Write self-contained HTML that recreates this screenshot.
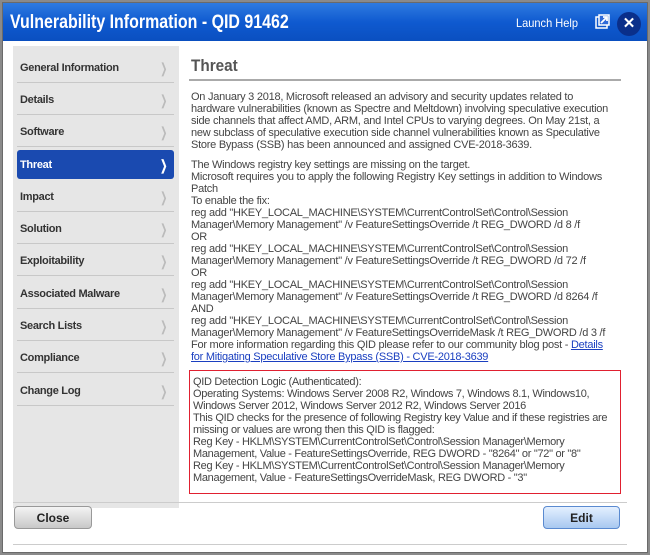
<!DOCTYPE html>
<html><head><style>
*{margin:0;padding:0;box-sizing:border-box}
body{width:650px;height:555px;background:#8a8a8a;font-family:"Liberation Sans",Arial,sans-serif;overflow:hidden;position:relative}
#win{position:absolute;left:2px;top:2px;width:646px;height:551px;background:#fff;border:1px solid #6a6a6a}
#tb{position:absolute;left:0;top:0;width:644px;height:38px;background:linear-gradient(#2f7be0,#0f5ad0 50%,#0a4fc0);}
#tb h1{position:absolute;left:7px;top:9px;color:#fff;font-size:19px;font-weight:bold;transform:scaleX(.84);transform-origin:0 0;white-space:nowrap}
#lh{position:absolute;left:513px;top:13px;color:#fff;font-size:12px;transform:scaleX(.92);transform-origin:0 0}
#pop{position:absolute;left:592px;top:11px;width:15px;height:15px}
#x{position:absolute;left:614px;top:9px;width:24px;height:24px;border-radius:12px;background:#0a2f8a;color:#fff;font-size:15px;font-weight:bold;text-align:center;line-height:24px}
#side{position:absolute;left:10px;top:43px;width:166px;height:462px;background:#e6e6e6}
.it{position:absolute;left:4px;width:157px;height:31px;border-bottom:1px solid #c8c8c8;font-size:11px;font-weight:bold;color:#333;padding:10px 0 0 3px;letter-spacing:-0.3px}
.it span{position:absolute;right:5px;top:8px;color:#bbb;font-size:14px;font-weight:normal;transform:scaleX(.6)}
.sel{background:#1a4ab0;color:#fff;border-radius:3px;border:none;height:29px;padding-top:9px}
.sel span{color:#fff;font-weight:bold;top:7px}
#ct{position:absolute;left:186px;top:43px;width:432px;font-size:11px;line-height:12px;color:#444}
h2{font-size:17px;color:#555;font-weight:bold;padding:14px 0 7px 2px;border-bottom:2px solid #aaa;margin-bottom:10px}
h2 span{display:inline-block;transform:scaleX(.9);transform-origin:0 0}
.m{letter-spacing:-0.25px;margin-bottom:8px;padding-left:2px;white-space:nowrap}
a{color:#1a3fc0}
#box{border:1px solid #e02030;padding:5px 4px 6px 3px;margin-top:7px;height:124px;letter-spacing:-0.3px}
.btn{position:absolute;top:503px;height:23px;border-radius:4px;font-size:12px;font-weight:bold;color:#222;text-align:center;line-height:22px}
</style></head><body><div id="win">
<div id="tb"><h1>Vulnerability Information - QID 91462</h1><div id="lh">Launch Help</div>
<svg id="pop" viewBox="0 0 15 15"><rect x="1" y="3" width="11" height="11" fill="none" stroke="#fff" stroke-width="1.5"/><rect x="4" y="1" width="10" height="10" fill="#2f6ad8" stroke="#fff" stroke-width="1.5"/><path d="M6 9L12 3M8 3h4v4" stroke="#fff" stroke-width="1.8" fill="none"/></svg>
<div id="x">✕</div></div>
<div id="side">
<div class="it" style="top:6px">General Information<span>❯</span></div>
<div class="it" style="top:38px">Details<span>❯</span></div>
<div class="it" style="top:70px">Software<span>❯</span></div>
<div class="it sel" style="top:104px">Threat<span>❯</span></div>
<div class="it" style="top:135px">Impact<span>❯</span></div>
<div class="it" style="top:167px">Solution<span>❯</span></div>
<div class="it" style="top:199px">Exploitability<span>❯</span></div>
<div class="it" style="top:232px">Associated Malware<span>❯</span></div>
<div class="it" style="top:264px">Search Lists<span>❯</span></div>
<div class="it" style="top:296px">Compliance<span>❯</span></div>
<div class="it" style="top:329px">Change Log<span>❯</span></div>
</div>
<div id="ct">
<h2><span>Threat</span></h2>
<p class="m">On January 3 2018, Microsoft released an advisory and security updates related to<br>hardware vulnerabilities (known as Spectre and Meltdown) involving speculative execution<br>side channels that affect AMD, ARM, and Intel CPUs to varying degrees. On May 21st, a<br>new subclass of speculative execution side channel vulnerabilities known as Speculative<br>Store Bypass (SSB) has been announced and assigned CVE-2018-3639.</p>
<p class="m" style="margin:0">The Windows registry key settings are missing on the target.<br>Microsoft requires you to apply the following Registry Key settings in addition to Windows<br>Patch<br>To enable the fix:<br>reg add "HKEY_LOCAL_MACHINE\SYSTEM\CurrentControlSet\Control\Session<br>Manager\Memory Management" /v FeatureSettingsOverride /t REG_DWORD /d 8 /f<br>OR<br>reg add "HKEY_LOCAL_MACHINE\SYSTEM\CurrentControlSet\Control\Session<br>Manager\Memory Management" /v FeatureSettingsOverride /t REG_DWORD /d 72 /f<br>OR<br>reg add "HKEY_LOCAL_MACHINE\SYSTEM\CurrentControlSet\Control\Session<br>Manager\Memory Management" /v FeatureSettingsOverride /t REG_DWORD /d 8264 /f<br>AND<br>reg add "HKEY_LOCAL_MACHINE\SYSTEM\CurrentControlSet\Control\Session<br>Manager\Memory Management" /v FeatureSettingsOverrideMask /t REG_DWORD /d 3 /f<br>For more information regarding this QID please refer to our community blog post - <a href="#">Details<br>for Mitigating Speculative Store Bypass (SSB) - CVE-2018-3639</a></p>
<div id="box">QID Detection Logic (Authenticated):<br>Operating Systems: Windows Server 2008 R2, Windows 7, Windows 8.1, Windows10, Windows Server 2012, Windows Server 2012 R2, Windows Server 2016<br>This QID checks for the presence of following Registry key Value and if these registries are missing or values are wrong then this QID is flagged:<br>Reg Key - HKLM\SYSTEM\CurrentControlSet\Control\Session Manager\Memory Management, Value - FeatureSettingsOverride, REG DWORD - "8264" or "72" or "8"<br>Reg Key - HKLM\SYSTEM\CurrentControlSet\Control\Session Manager\Memory Management, Value - FeatureSettingsOverrideMask, REG DWORD - "3"</div>
</div>
<div style="position:absolute;left:10px;top:499px;width:614px;border-top:1px solid #ccc"></div>
<div class="btn" style="left:11px;width:78px;background:linear-gradient(#f4f4f4,#c8c8c8);border:1px solid #999">Close</div>
<div class="btn" style="left:540px;width:77px;background:linear-gradient(#e4f0ff,#a8c8f0);border:1px solid #5a8ad0">Edit</div>
<div style="position:absolute;left:10px;top:541px;width:614px;border-top:1px solid #ccc"></div>
</div></body></html>
